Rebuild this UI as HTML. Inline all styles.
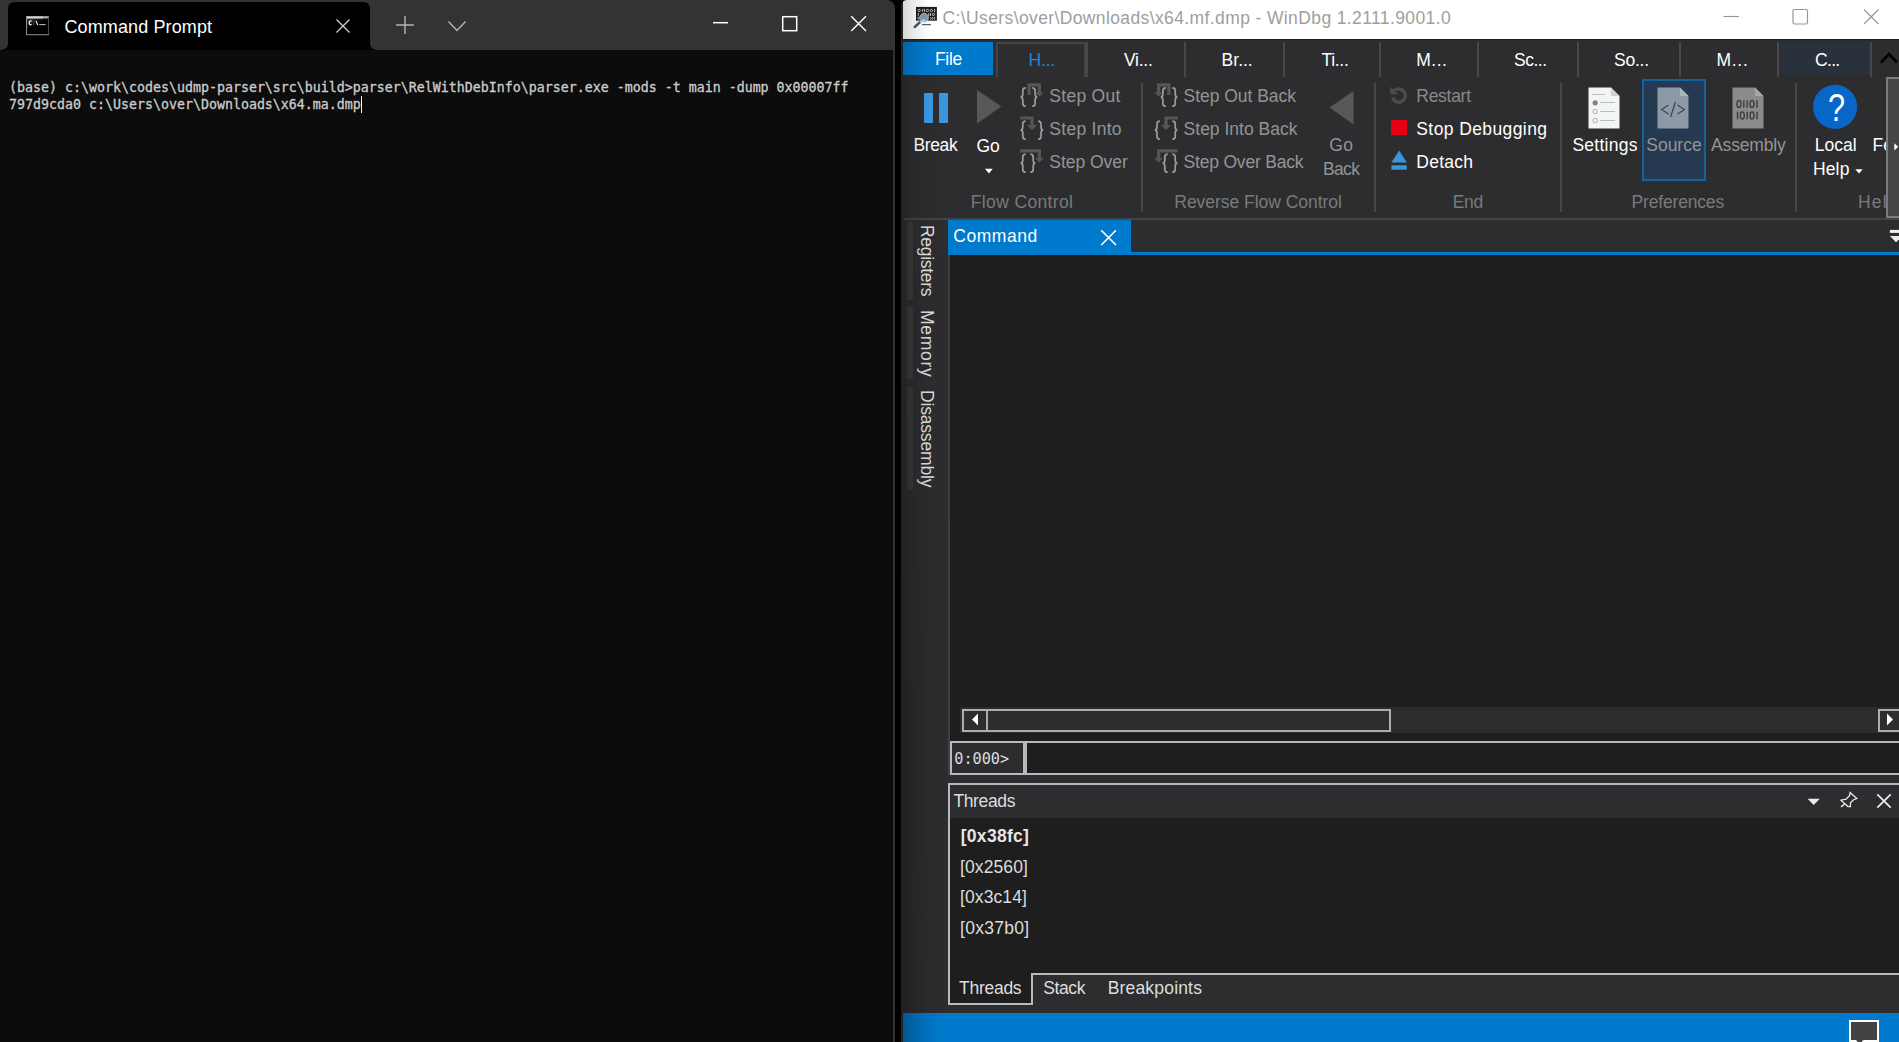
<!DOCTYPE html>
<html lang="en">
<head>
<meta charset="utf-8">
<title>Command Prompt and WinDbg</title>
<style>
html,body{margin:0;padding:0;background:#000;}
body{width:1899px;height:1042px;overflow:hidden;position:relative;font-family:"Liberation Sans",sans-serif;}
#term,#dbg{position:absolute;top:0;height:1042px;overflow:hidden;}
#term{left:0;width:895px;background:#333333;border-top-right-radius:8px;}
#dbg{left:901px;width:998px;background:#2d2d30;border-top-left-radius:6px;}
#term div,#dbg div,#term svg,#dbg svg,#term section,#dbg section,#term header,#dbg header,#dbg nav,#dbg footer,#dbg ul,#dbg li,.t{position:absolute;}
.grp{left:0;top:0;width:0;height:0;margin:0;padding:0;list-style:none;}
.t{white-space:pre;line-height:1;font-size:17.5px;margin:0;padding:0;}
.v{writing-mode:vertical-rl;text-orientation:sideways;}
pre{margin:0;}
</style>
</head>
<body>
<div id="term" class="window">
<section id="term-body" class="grp">
<div style="left:0px;top:50px;width:893px;height:992px;background:#0c0c0c;"></div>
<pre id="con" style="position:absolute;left:9px;top:79px;font-family:'DejaVu Sans Mono','Liberation Mono',monospace;font-size:13.29px;line-height:17px;color:#cccccc;-webkit-text-stroke:0.3px #cccccc;">(base) c:\work\codes\udmp-parser\src\build&gt;parser\RelWithDebInfo\parser.exe -mods -t main -dump 0x00007ff
797d9cda0 c:\Users\over\Downloads\x64.ma.dmp</pre>
<div class="cursor" style="left:360.8px;top:96px;width:1.5px;height:17px;background:#f2f2f2;"></div>
</section>
<header id="term-titlebar" class="grp">
<svg class="tab" style="left:0px;top:0px;" width="380" height="50" viewBox="0 0 380 50"><path d="M0 50 Q8 50 8 43 L8 9 Q8 2 15 2 L363 2 Q370 2 370 9 L370 43 Q370 50 378 50 Z" fill="#000"/></svg>
<svg class="ico" style="left:26px;top:16px;" width="24" height="20" viewBox="0 0 24 20"><defs><linearGradient id="tig" x1="0" y1="0" x2="0.6" y2="1"><stop offset="0" stop-color="#484848"/><stop offset="0.55" stop-color="#000"/></linearGradient></defs><rect x="0.5" y="0.5" width="22" height="18.2" fill="url(#tig)" stroke="#8c8f90" stroke-width="1"/><path d="M22.5 1 V18.5" stroke="#4a4a4a" stroke-width="1"/><rect x="0.8" y="0.6" width="16.4" height="1.9" fill="#d3dbdc"/><rect x="17.2" y="0.6" width="5" height="1.9" fill="#8fa6c4"/><path d="M5.6 5.2 Q3.2 4.4 3.2 6.8 Q3.2 9.2 5.6 8.4" stroke="#f4f4f4" stroke-width="1.3" fill="none"/><path d="M7.6 5.4 v0.9 M7.6 7.6 v0.9" stroke="#7d868a" stroke-width="0.9"/><path d="M10 4.9 L11.8 9" stroke="#f4f4f4" stroke-width="1.1"/><path d="M13.3 8.6 H19.6" stroke="#c4c4c4" stroke-width="1"/></svg>
<span class="t" style="left:64.50px;top:17.80px;font-size:18px;color:#ffffff;letter-spacing:0.115px;">Command Prompt</span>
<svg class="ico" style="left:335px;top:18px;" width="16" height="16" viewBox="0 0 16 16"><path d="M1.5 1.5 L14.5 14.5 M14.5 1.5 L1.5 14.5" stroke="#d0d0d0" stroke-width="1.3" fill="none"/></svg>
<svg class="ico" style="left:395px;top:15px;" width="20" height="20" viewBox="0 0 20 20"><path d="M10 1 V19 M1 10 H19" stroke="#b4b4b4" stroke-width="1.4" fill="none"/></svg>
<svg class="ico" style="left:447px;top:19px;" width="20" height="14" viewBox="0 0 20 14"><path d="M1.5 2.5 L10 11.5 L18.5 2.5" stroke="#b4b4b4" stroke-width="1.4" fill="none"/></svg>
<svg class="ico" style="left:712px;top:14px;" width="18" height="18" viewBox="0 0 18 18"><path d="M1 8.7 H16" stroke="#fff" stroke-width="1.5"/></svg>
<svg class="ico" style="left:781px;top:15px;" width="18" height="18" viewBox="0 0 18 18"><rect x="1.7" y="1.7" width="14" height="14" fill="none" stroke="#fff" stroke-width="1.5"/></svg>
<svg class="ico" style="left:850px;top:15px;" width="18" height="18" viewBox="0 0 18 18"><path d="M1.2 1.2 L16 16 M16 1.2 L1.2 16" stroke="#fff" stroke-width="1.4" fill="none"/></svg>
</header>
</div>
<div id="dbg" class="window">
<header id="dbg-titlebar" class="grp">
<div style="left:2px;top:0px;width:996px;height:39px;background:#fff;"></div>
<div style="left:2px;top:39px;width:996px;height:1.1px;background:#1f1f21;"></div>
<svg class="ico" style="left:12px;top:6px;" width="26" height="24" viewBox="0 0 26 24"><rect x="3" y="0.9" width="20.9" height="13.8" fill="#1d1d1f"/><g fill="none" stroke="#dcdcdc" stroke-width="0.8"><circle cx="6.2" cy="4.5" r="1.15"/><path d="M9.6 2.9v3.2M11.4 2.9v3.2"/><circle cx="14.4" cy="4.5" r="1.15"/><circle cx="18.4" cy="4.5" r="1.15"/><path d="M21.6 2.9v3.2"/><path d="M5.3 7v3M15.7 7v3M17.5 7v3"/><circle cx="20.4" cy="8.5" r="1.15"/><path d="M19.7 11v2.6M21.6 11v2.6"/><circle cx="5.6" cy="12.3" r="1"/><path d="M17.2 11.3 l1.3 1.2 l-1.3 1.2"/></g><circle cx="11.1" cy="11.7" r="4.3" fill="#a4c2e0" fill-opacity="0.74" stroke="#b7c4cf" stroke-width="0.9"/><ellipse cx="10.6" cy="14" rx="1.7" ry="0.7" fill="#c9e4fb" fill-opacity="0.9"/><path d="M6.6 16.5 L1.7 21" stroke="#4a5a66" stroke-width="2.4" stroke-linecap="round"/><path d="M9.1 18.6 H17.9" stroke="#4f6372" stroke-width="1.1"/></svg>
<span class="t" style="left:41.50px;top:10.10px;color:#9e9e9e;letter-spacing:0.384px;">C:\Users\over\Downloads\x64.mf.dmp - WinDbg 1.2111.9001.0</span>
<svg class="ico" style="left:821px;top:8px;" width="18" height="18" viewBox="0 0 18 18"><path d="M1.5 8.5 H17" stroke="#969696" stroke-width="1.15"/></svg>
<svg class="ico" style="left:890px;top:8px;" width="18" height="18" viewBox="0 0 18 18"><rect x="2" y="1.5" width="14.5" height="14.5" rx="1.5" fill="none" stroke="#969696" stroke-width="1.15"/></svg>
<svg class="ico" style="left:961px;top:8px;" width="18" height="18" viewBox="0 0 18 18"><path d="M2 1.5 L16.5 16 M16.5 1.5 L2 16" stroke="#969696" stroke-width="1.15" fill="none"/></svg>
</header>
<nav id="ribbon-tabs" class="grp">
<div class="file" style="left:2px;top:42px;width:90px;height:33px;background:#007acc;"></div>
<span class="t" style="left:34.00px;top:51.30px;color:#ffffff;letter-spacing:-0.333px;">File</span>
<div class="sel" style="left:95px;top:42px;width:86px;height:33px;border:2.2px solid #444447;border-bottom:none;box-sizing:content-box;"></div>
<div class="sep" style="left:185px;top:42px;width:2.1px;height:35px;background:#48484a;"></div>
<div class="sep" style="left:283px;top:42px;width:2.1px;height:35px;background:#48484a;"></div>
<div class="sep" style="left:382px;top:42px;width:2.1px;height:35px;background:#48484a;"></div>
<div class="sep" style="left:478px;top:42px;width:2.1px;height:35px;background:#48484a;"></div>
<div class="sep" style="left:576px;top:42px;width:2.1px;height:35px;background:#48484a;"></div>
<div class="sep" style="left:676px;top:42px;width:2.1px;height:35px;background:#48484a;"></div>
<div class="sep" style="left:778px;top:42px;width:2.1px;height:35px;background:#48484a;"></div>
<div class="sep" style="left:876px;top:42px;width:2.1px;height:35px;background:#48484a;"></div>
<div class="sep" style="left:969px;top:42px;width:2.1px;height:35px;background:#48484a;"></div>
<div class="hot" style="left:880px;top:42px;width:89px;height:33px;background:#29323c;"></div>
<span class="t" style="left:127.50px;top:52.10px;color:#1c86d8;letter-spacing:-0.167px;">H...</span>
<span class="t" style="left:223.00px;top:52.10px;color:#ffffff;letter-spacing:-0.250px;">Vi...</span>
<span class="t" style="left:320.60px;top:52.10px;color:#ffffff;letter-spacing:0.000px;">Br...</span>
<span class="t" style="left:420.40px;top:52.10px;color:#ffffff;letter-spacing:-0.275px;">Ti...</span>
<span class="t" style="left:515.30px;top:52.10px;color:#ffffff;letter-spacing:0.467px;">M...</span>
<span class="t" style="left:613.00px;top:52.10px;color:#ffffff;letter-spacing:-0.500px;">Sc...</span>
<span class="t" style="left:713.00px;top:52.10px;color:#ffffff;letter-spacing:-0.250px;">So...</span>
<span class="t" style="left:815.60px;top:52.10px;color:#ffffff;letter-spacing:0.667px;">M...</span>
<span class="t" style="left:914.00px;top:52.10px;color:#ffffff;letter-spacing:-0.667px;">C...</span>
<svg class="ico" style="left:977px;top:50px;" width="22" height="16" viewBox="0 0 22 16"><path d="M3 12.5 L11 4 L19 12.5" stroke="#050505" stroke-width="2.9" fill="none"/></svg>
</nav>
<section id="ribbon" class="grp">
<div id="grp-flow" class="grp">
<div style="left:23px;top:93px;width:9.3px;height:30px;background:#3a96dd;"></div>
<div style="left:38px;top:93px;width:9.3px;height:30px;background:#3a96dd;"></div>
<span class="t" style="left:12.50px;top:136.70px;color:#ffffff;letter-spacing:-0.375px;">Break</span>
<svg class="ico" style="left:75px;top:89px;" width="27" height="36" viewBox="0 0 27 36"><path d="M1 1 L25.5 17.5 L1 34.5 Z" fill="#585858"/></svg>
<span class="t" style="left:75.40px;top:137.80px;color:#ffffff;letter-spacing:0.100px;">Go</span>
<svg class="ico" style="left:83px;top:168px;" width="12" height="7" viewBox="0 0 12 7"><path d="M1 0.8 H8.8 L4.9 5.6 Z" fill="#fff"/></svg>
<svg class="ico" style="left:118px;top:82px;" width="28" height="96" viewBox="0 0 28 96"><path d="M10.1 13 V2.9 H20.4 V10.5" fill="none" stroke="#565658" stroke-width="3.2"/><path d="M16 10.2 H24.9 L20.45 14.4 Z" fill="#565658"/><path d="M6.7 5.8 Q3.8 5.8 3.8 8.6 L3.8 12 Q3.8 15 1.6 15 Q3.8 15 3.8 18 L3.8 21.4 Q3.8 24.2 6.7 24.2 M13.2 5.8 Q16.1 5.8 16.1 8.6 L16.1 12 Q16.1 15 18.3 15 Q16.1 15 16.1 18 L16.1 21.4 Q16.1 24.2 13.2 24.2" fill="none" stroke="#9a9a9a" stroke-width="1.75"/><path d="M1.2 36 H13 V43.5" fill="none" stroke="#565658" stroke-width="3.2"/><path d="M7.9 43 H18.1 L13 47.9 Z" fill="#565658"/><path d="M6.7 39 Q3.8 39 3.8 41.8 L3.8 45.1 Q3.8 48.1 1.6 48.1 Q3.8 48.1 3.8 51.1 L3.8 54.4 Q3.8 57.2 6.7 57.2 M19.1 39 Q22 39 22 41.8 L22 45.1 Q22 48.1 24.2 48.1 Q22 48.1 22 51.1 L22 54.4 Q22 57.2 19.1 57.2" fill="none" stroke="#9a9a9a" stroke-width="1.75"/><path d="M1.2 68.8 H20.4 V76.5" fill="none" stroke="#565658" stroke-width="3.2"/><path d="M16 76 H24.9 L20.45 80.4 Z" fill="#565658"/><path d="M6.7 72.1 Q3.8 72.1 3.8 74.9 L3.8 78.15 Q3.8 81.15 1.6 81.15 Q3.8 81.15 3.8 84.15 L3.8 87.4 Q3.8 90.2 6.7 90.2 M11.3 72.1 Q14.2 72.1 14.2 74.9 L14.2 78.15 Q14.2 81.15 16.4 81.15 Q14.2 81.15 14.2 84.15 L14.2 87.4 Q14.2 90.2 11.3 90.2" fill="none" stroke="#9a9a9a" stroke-width="1.75"/></svg>
<span class="t" style="left:148.30px;top:88.00px;color:#949494;letter-spacing:0.286px;">Step Out</span>
<span class="t" style="left:148.30px;top:121.00px;color:#949494;letter-spacing:0.275px;">Step Into</span>
<span class="t" style="left:148.30px;top:154.00px;color:#949494;letter-spacing:-0.037px;">Step Over</span>
<span class="t" style="left:69.80px;top:194.00px;color:#7a7a7a;letter-spacing:0.355px;">Flow Control</span>
</div>
<div id="grp-reverse" class="grp">
<div class="gsep" style="left:240.1px;top:83px;width:2px;height:129px;background:#47474a;"></div>
<svg class="ico" style="left:252px;top:82px;" width="28" height="96" viewBox="0 0 28 96"><g transform="translate(26 0) scale(-1 1)"><path d="M10.1 13 V2.9 H20.4 V10.5" fill="none" stroke="#565658" stroke-width="3.2"/><path d="M16 10.2 H24.9 L20.45 14.4 Z" fill="#565658"/><path d="M6.7 5.8 Q3.8 5.8 3.8 8.6 L3.8 12 Q3.8 15 1.6 15 Q3.8 15 3.8 18 L3.8 21.4 Q3.8 24.2 6.7 24.2 M13.2 5.8 Q16.1 5.8 16.1 8.6 L16.1 12 Q16.1 15 18.3 15 Q16.1 15 16.1 18 L16.1 21.4 Q16.1 24.2 13.2 24.2" fill="none" stroke="#9a9a9a" stroke-width="1.75"/><path d="M1.2 36 H13 V43.5" fill="none" stroke="#565658" stroke-width="3.2"/><path d="M7.9 43 H18.1 L13 47.9 Z" fill="#565658"/><path d="M6.7 39 Q3.8 39 3.8 41.8 L3.8 45.1 Q3.8 48.1 1.6 48.1 Q3.8 48.1 3.8 51.1 L3.8 54.4 Q3.8 57.2 6.7 57.2 M19.1 39 Q22 39 22 41.8 L22 45.1 Q22 48.1 24.2 48.1 Q22 48.1 22 51.1 L22 54.4 Q22 57.2 19.1 57.2" fill="none" stroke="#9a9a9a" stroke-width="1.75"/><path d="M1.2 68.8 H20.4 V76.5" fill="none" stroke="#565658" stroke-width="3.2"/><path d="M16 76 H24.9 L20.45 80.4 Z" fill="#565658"/><path d="M6.7 72.1 Q3.8 72.1 3.8 74.9 L3.8 78.15 Q3.8 81.15 1.6 81.15 Q3.8 81.15 3.8 84.15 L3.8 87.4 Q3.8 90.2 6.7 90.2 M11.3 72.1 Q14.2 72.1 14.2 74.9 L14.2 78.15 Q14.2 81.15 16.4 81.15 Q14.2 81.15 14.2 84.15 L14.2 87.4 Q14.2 90.2 11.3 90.2" fill="none" stroke="#9a9a9a" stroke-width="1.75"/></g></svg>
<span class="t" style="left:282.60px;top:88.00px;color:#949494;letter-spacing:-0.033px;">Step Out Back</span>
<span class="t" style="left:282.60px;top:121.00px;color:#949494;letter-spacing:0.000px;">Step Into Back</span>
<span class="t" style="left:282.60px;top:154.00px;color:#949494;letter-spacing:-0.200px;">Step Over Back</span>
<svg class="ico" style="left:427px;top:90px;" width="27" height="36" viewBox="0 0 27 36"><path d="M25.5 1 L1.5 17.5 L25.5 34.5 Z" fill="#585858"/></svg>
<span class="t" style="left:428.30px;top:136.80px;color:#949494;letter-spacing:0.400px;">Go</span>
<span class="t" style="left:422.00px;top:160.80px;color:#949494;letter-spacing:-0.667px;">Back</span>
<span class="t" style="left:273.30px;top:194.00px;color:#7a7a7a;letter-spacing:-0.032px;">Reverse Flow Control</span>
</div>
<div id="grp-end" class="grp">
<div class="gsep" style="left:473.1px;top:83px;width:2px;height:129px;background:#47474a;"></div>
<svg class="ico" style="left:488px;top:84.5px;" width="20" height="20" viewBox="0 0 20 20"><path d="M5.2 5.8 A6.6 6.6 0 1 1 3.5 12.6" fill="none" stroke="#4c4c4e" stroke-width="3.4"/><path d="M1.2 1.6 V9.2 H9 Z" fill="#4c4c4e"/></svg>
<span class="t" style="left:515.30px;top:88.00px;color:#888888;letter-spacing:-0.283px;">Restart</span>
<div style="left:490.3px;top:120.2px;width:15.3px;height:15.3px;background:#e60012;"></div>
<span class="t" style="left:515.30px;top:121.00px;color:#ffffff;letter-spacing:0.400px;">Stop Debugging</span>
<svg class="ico" style="left:489px;top:149px;" width="18" height="22" viewBox="0 0 18 22"><path d="M9.1 1.4 L16.8 13.6 H1.4 Z" fill="#3a96dd"/><rect x="1.4" y="16.3" width="15.4" height="4.4" fill="#3a96dd"/></svg>
<span class="t" style="left:515.30px;top:154.00px;color:#ffffff;letter-spacing:0.260px;">Detach</span>
<span class="t" style="left:551.70px;top:194.00px;color:#7a7a7a;letter-spacing:-0.350px;">End</span>
</div>
<div id="grp-prefs" class="grp">
<div class="gsep" style="left:659px;top:83px;width:2px;height:129px;background:#47474a;"></div>
<svg class="ico" style="left:687px;top:87px;" width="32" height="42" viewBox="0 0 32 42"><path d="M0.5 0.5 H23 L31.5 9 V41.5 H0.5 Z" fill="#f3f4f4"/><path d="M23 0.5 V9 H31.5 Z" fill="#cfd2d4"/><g stroke="#b9bdc0" stroke-width="1.2"><path d="M4 7.5 H17 M12 15.5 H27 M12 24.5 H27 M12 33.5 H27"/></g><circle cx="7.2" cy="15.8" r="2.6" fill="#808488"/><circle cx="7.2" cy="24.6" r="2.2" fill="none" stroke="#a9adb0" stroke-width="1"/><circle cx="7.2" cy="33.6" r="2.2" fill="none" stroke="#a9adb0" stroke-width="1"/></svg>
<span class="t" style="left:671.40px;top:136.70px;color:#ffffff;letter-spacing:0.257px;">Settings</span>
<div class="on" style="left:741px;top:79px;width:64px;height:102px;background:#253a50;border:2px solid #12639e;box-sizing:border-box;"></div>
<svg class="ico" style="left:756px;top:87px;" width="32" height="42" viewBox="0 0 32 42"><path d="M0.5 0.5 H23 L31.5 9 V41.5 H0.5 Z" fill="#8d9aa6"/><path d="M23 0.5 V9 H31.5 Z" fill="#a9b4bd"/><path d="M11.5 18 L4.5 22.5 L11.5 27 M20.5 18 L27.5 22.5 L20.5 27 M18.5 15 L13.5 30" fill="none" stroke="#3d4a55" stroke-width="1.3"/></svg>
<span class="t" style="left:745.30px;top:136.70px;color:#949494;letter-spacing:-0.020px;">Source</span>
<svg class="ico" style="left:830.5px;top:87px;" width="32" height="42" viewBox="0 0 32 42"><path d="M0.5 0.5 H23 L31.5 9 V41.5 H0.5 Z" fill="#8b8b8b"/><path d="M23 0.5 V9 H31.5 Z" fill="#a6a6a6"/><g fill="none" stroke="#3c3c3c" stroke-width="1.4"><ellipse cx="7" cy="17" rx="2" ry="3.6"/><path d="M11.8 13.2 v7.6 M15.2 13.2 v7.6"/><ellipse cx="20" cy="17" rx="2" ry="3.6"/><path d="M25 13.2 v7.6"/><path d="M5.5 24.7 v7.6"/><ellipse cx="10.3" cy="28.5" rx="2" ry="3.6"/><path d="M15.2 24.7 v7.6"/><ellipse cx="20" cy="28.5" rx="2" ry="3.6"/><path d="M25 24.7 v7.6"/></g></svg>
<span class="t" style="left:810.00px;top:136.70px;color:#949494;letter-spacing:-0.143px;">Assembly</span>
<span class="t" style="left:730.60px;top:194.00px;color:#7a7a7a;letter-spacing:-0.180px;">Preferences</span>
</div>
<div id="grp-help" class="grp">
<div class="gsep" style="left:894.2px;top:83px;width:2px;height:129px;background:#47474a;"></div>
<svg class="ico" style="left:911px;top:84px;" width="46" height="46" viewBox="0 0 46 46"><circle cx="23.1" cy="22.9" r="22.1" fill="#0766c6"/><text transform="translate(24.6 36.9) scale(0.85 1.09)" x="0" y="0" text-anchor="middle" font-family="Liberation Sans, sans-serif" font-size="36" fill="#fff">?</text></svg>
<span class="t" style="left:913.70px;top:137.20px;color:#ffffff;letter-spacing:0.050px;">Local</span>
<span class="t" style="left:911.90px;top:161.00px;color:#ffffff;letter-spacing:0.167px;">Help</span>
<svg class="ico" style="left:954px;top:169px;" width="9" height="5" viewBox="0 0 9 5"><path d="M0.3 0.3 H7.7 L4 4.6 Z" fill="#fff"/></svg>
<span class="t" style="left:971.40px;top:137.20px;color:#ffffff;letter-spacing:0.086px;">Feedback</span>
<span class="t" style="left:957.00px;top:194.00px;color:#7a7a7a;letter-spacing:1.167px;">Help</span>
<div class="scroll" style="left:985px;top:77.2px;width:14px;height:141px;background:#454547;border:2px solid #7c7c7e;border-right:none;box-sizing:border-box;"></div>
<svg class="ico" style="left:992.5px;top:143px;" width="5" height="8" viewBox="0 0 5 8"><path d="M0.3 0.3 L4.2 3.8 L0.3 7.4 Z" fill="#fff"/></svg>
</div>
<div class="line" style="left:2px;top:218px;width:996px;height:2.3px;background:#444447;"></div>
</section>
<nav id="side-tabs" class="grp">
<div style="left:6px;top:222px;width:6px;height:78px;background:#3a3a3e;"></div>
<div style="left:6px;top:307px;width:6px;height:72px;background:#3a3a3e;"></div>
<div style="left:6px;top:387px;width:6px;height:103px;background:#3a3a3e;"></div>
<span class="t v" style="left:16.3px;top:224.90px;color:#dddddd;letter-spacing:-0.300px;">Registers</span>
<span class="t v" style="left:16.3px;top:310.30px;color:#dddddd;letter-spacing:0.700px;">Memory</span>
<span class="t v" style="left:16.3px;top:390.00px;color:#dddddd;letter-spacing:-0.180px;">Disassembly</span>
</nav>
<section id="command" class="grp">
<div class="edge" style="left:47px;top:220px;width:2px;height:793px;background:#3f3f44;"></div>
<div class="out" style="left:49px;top:255px;width:949px;height:486px;background:#1e1e1e;"></div>
<div class="tab" style="left:47px;top:220px;width:183px;height:33px;background:#007acc;"></div>
<div style="left:47px;top:251.5px;width:951px;height:3.5px;background:#007acc;"></div>
<span class="t" style="left:52.30px;top:227.80px;color:#ffffff;letter-spacing:0.533px;">Command</span>
<svg class="ico" style="left:199px;top:229px;" width="18" height="18" viewBox="0 0 18 18"><path d="M1.2 1.2 L16 16 M16 1.2 L1.2 16" stroke="#fff" stroke-width="1.6" fill="none"/></svg>
<svg class="ico" style="left:988px;top:229px;" width="14" height="14" viewBox="0 0 14 14"><rect x="0.9" y="0.9" width="12" height="3" fill="#f0f0f0"/><path d="M0.9 7 H13.1 L7 13.2 Z" fill="#ececec"/></svg>
<div class="hs" style="left:59px;top:707px;width:939px;height:26px;background:#2d2d30;"></div>
<div style="left:61px;top:709px;width:26px;height:23px;border:2.2px solid #b5ad9f;box-sizing:border-box;"></div>
<div class="thumb" style="left:85.4px;top:709px;width:404.6px;height:23px;border:2.2px solid #b5ad9f;box-sizing:border-box;"></div>
<svg class="ico" style="left:70px;top:713px;" width="8" height="14" viewBox="0 0 8 14"><path d="M7 0.6 V12.6 L1 6.6 Z" fill="#fff"/></svg>
<div style="left:976.5px;top:709px;width:24px;height:23px;border:2.2px solid #b5ad9f;box-sizing:border-box;"></div>
<svg class="ico" style="left:985px;top:713px;" width="8" height="14" viewBox="0 0 8 14"><path d="M1 0.6 V12.6 L7 6.6 Z" fill="#fff"/></svg>
<div class="in" style="left:49px;top:741px;width:952px;height:34px;background:#1e1e1e;border:2.2px solid #b7b9bf;box-sizing:border-box;"></div>
<div class="prompt" style="left:51px;top:743px;width:70.8px;height:30px;background:#2d2d30;border-right:4.4px solid #b7b9bf;box-sizing:content-box;"></div>
<span class="t" style="left:53.30px;top:752.10px;font-size:15.2px;color:#dcdcdc;letter-spacing:0.000px;font-family:'DejaVu Sans Mono', 'Liberation Mono', monospace;">0:000&gt;</span>
</section>
<section id="threads" class="grp">
<div style="left:47px;top:775px;width:951px;height:8px;background:#2d2d30;"></div>
<div class="frame" style="left:47px;top:783px;width:954px;height:222px;background:#1e1e1e;border:2.2px solid #b7b9bf;box-sizing:border-box;"></div>
<div class="cap" style="left:49.2px;top:785.2px;width:949px;height:33px;background:#2d2d30;"></div>
<span class="t" style="left:52.40px;top:792.70px;color:#dddddd;letter-spacing:-0.350px;">Threads</span>
<svg class="ico" style="left:906px;top:798px;" width="14" height="8" viewBox="0 0 14 8"><path d="M0.6 0.8 H12.8 L6.7 7 Z" fill="#ececec"/></svg>
<svg class="ico" style="left:939px;top:791px;" width="18" height="18" viewBox="0 0 18 18"><path d="M10.1 1.5 L16.8 7.5 L13.6 8.7 L10.4 11.7 L10.4 15.6 L8 15.6 L0.9 9.2 L6.1 8.2 L9.6 4.5 Z" fill="none" stroke="#ececec" stroke-width="1.3" stroke-linejoin="miter"/><path d="M4.75 13 L1 15.9" stroke="#ececec" stroke-width="1.4"/></svg>
<svg class="ico" style="left:975px;top:793px;" width="16" height="16" viewBox="0 0 16 16"><path d="M1.3 1.3 L14.7 14.7 M14.7 1.3 L1.3 14.7" stroke="#ececec" stroke-width="1.7" fill="none"/></svg>
<ul id="thread-list" class="grp">
<li class="t" style="left:59.70px;top:827.60px;color:#e6e6e6;letter-spacing:0.300px;font-weight:700;">[0x38fc]</li>
<li class="t" style="left:59.10px;top:858.50px;color:#dcdcdc;letter-spacing:0.086px;">[0x2560]</li>
<li class="t" style="left:59.10px;top:889.30px;color:#dcdcdc;letter-spacing:0.086px;">[0x3c14]</li>
<li class="t" style="left:59.10px;top:920.20px;color:#dcdcdc;letter-spacing:0.257px;">[0x37b0]</li>
</ul>
<div style="left:132px;top:975.4px;width:866px;height:38px;background:#2d2d30;"></div>
<div style="left:130px;top:973.2px;width:868px;height:2.2px;background:#b7b9bf;"></div>
<div style="left:130px;top:973.2px;width:2.2px;height:32px;background:#b7b9bf;"></div>
<div style="left:47px;top:1005px;width:86px;height:8px;background:#2d2d30;"></div>
<span class="t" style="left:58.00px;top:980.40px;color:#dddddd;letter-spacing:-0.267px;">Threads</span>
<span class="t" style="left:142.30px;top:980.40px;color:#dddddd;letter-spacing:-0.400px;">Stack</span>
<span class="t" style="left:206.70px;top:980.40px;color:#dddddd;letter-spacing:0.180px;">Breakpoints</span>
</section>
<footer id="statusbar" class="grp">
<div style="left:2px;top:1013px;width:996px;height:29px;background:#007acc;"></div>
<div style="left:948px;top:1020px;width:30px;height:22.4px;background:#424242;border:2.2px solid #fff;box-sizing:border-box;"></div>
<svg class="ico" style="left:954px;top:1039.5px;" width="10" height="3" viewBox="0 0 10 3"><path d="M1 0 H8.4 L5.6 3 H3.6 Z" fill="#424242"/></svg>
</footer>
<div id="fx" class="grp">
<div style="left:0px;top:0px;width:2px;height:1042px;background:#222222;"></div>
<div style="left:2px;top:0px;width:27px;height:1042px;background:linear-gradient(to right,rgba(0,0,0,0.16),rgba(0,0,0,0.07) 45%,rgba(0,0,0,0));"></div>
<div style="left:2px;top:0px;width:44px;height:1042px;background:linear-gradient(to right,rgba(0,0,0,0.15),rgba(0,0,0,0.06) 50%,rgba(0,0,0,0));-webkit-mask-image:linear-gradient(to bottom,transparent,#000);mask-image:linear-gradient(to bottom,transparent,#000);"></div>
</div>
</div>
</body>
</html>
